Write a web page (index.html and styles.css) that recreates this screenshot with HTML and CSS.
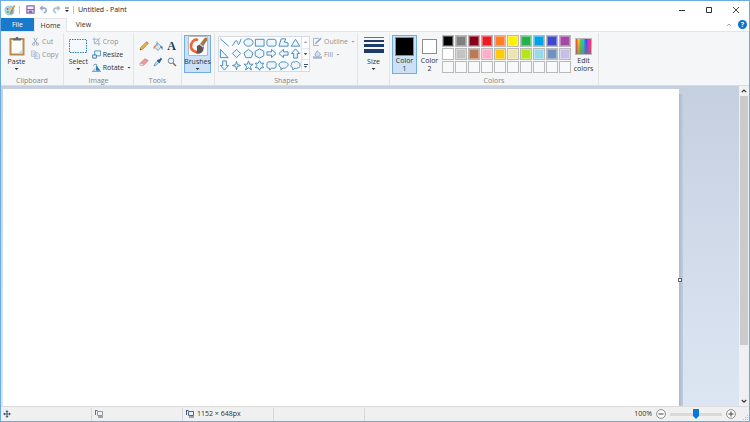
FILE: index.html
```html
<!DOCTYPE html>
<html lang="en">
<head>
<meta charset="utf-8">
<title>Untitled - Paint</title>
<link rel="stylesheet" href="styles.css">
</head>
<body>
<div class="window">
  <header class="titlebar">
    <svg class="app-icon" viewBox="0 0 12 12"><path d="M1 5.500C1 3 3 2 6 2s4 2 4 5-2 4-5 4-4-3-4-5.500z" fill="#a9d9ef" stroke="#6eb4d8" stroke-width=".6"/><circle cx="3.500" cy="5" r="1" fill="#e2574c"/><circle cx="3.800" cy="8" r="1" fill="#55ac48"/><circle cx="6" cy="4" r="1" fill="#f6c12d"/><path d="M6 10L10.500 1.500" stroke="#d98b2b" stroke-width="1.600"/><path d="M8 10V6" stroke="#4f86b5"/></svg>
    <span class="bar-rule"></span>
    <button class="quick" aria-label="Save"><svg viewBox="0 0 10 10"><path d="M1 1h8v8H1z" fill="#f4effb" stroke="#8667b5" stroke-width="1.400"/><path d="M1 4.500h8v1.300H1zM3 6.500h4V9H3z" fill="#8667b5"/></svg></button>
    <button class="quick" aria-label="Undo"><svg viewBox="0 0 10 10"><path d="M2 3.500h3.500C9 3.500 8.800 7.500 5.500 9" fill="none" stroke="#8fa9cc" stroke-width="1.800"/><path d="M0.500 3.500L4 .2v6.600z" fill="#8fa9cc"/></svg></button>
    <button class="quick" aria-label="Redo"><svg viewBox="0 0 10 10"><path d="M8 3.500H4.500C1 3.500 1.200 7.500 4.500 9" fill="none" stroke="#a9bdd6" stroke-width="1.800"/><path d="M9.500 3.500L6 .2v6.600z" fill="#a9bdd6"/></svg></button>
    <button class="customize" aria-label="Customize toolbar"><svg viewBox="0 0 6 6"><path d="M1 1h4" stroke="#333" stroke-width=".8"/><path d="M1 3h4L3 5z" fill="#222"/></svg></button>
    <span class="bar-rule"></span>
    <h1>Untitled - Paint</h1>
    <div class="caption-buttons">
      <button aria-label="Minimize"><svg viewBox="0 0 8 8"><path d="M1 4.500h6" stroke="#333"/></svg></button>
      <button aria-label="Maximize"><svg viewBox="0 0 8 8"><path d="M1.500 1.500h5v5h-5z" fill="none" stroke="#333"/></svg></button>
      <button aria-label="Close"><svg viewBox="0 0 8 8"><path d="M1 1l6 6M7 1L1 7" stroke="#333" stroke-width=".9"/></svg></button>
    </div>
  </header>

  <nav class="tabs">
    <button class="tab file">File</button>
    <button class="tab active">Home</button>
    <button class="tab">View</button>
    <div class="tabs-end">
      <button class="collapse" aria-label="Collapse ribbon"><svg viewBox="0 0 6 6"><path d="M.8 4L3 2l2.200 2" fill="none" stroke="#999" stroke-width=".9"/></svg></button>
      <button class="help" aria-label="Help">?</button>
    </div>
  </nav>

  <main class="ribbon">
    <section class="group clipboard">
      <div class="tools-row">
        <button class="big"><svg class="big-icon" viewBox="0 0 18 20"><path d="M2.500 3h13v15.500h-13z" fill="#fcfcfc" stroke="#bd8848" stroke-width="2"/><path d="M5 4.500V2.500h2.500L8 1h2l.5 1.500H13v2z" fill="#626a78"/><path d="M10 17.500l4.500-4.500v4.500z" fill="#ccd4df"/></svg><span>Paste</span><i class="arrow"></i></button>
        <div class="stack">
          <button class="small disabled"><svg viewBox="0 0 10 10"><path d="M3 1l3.500 6M7 1L3.500 7" stroke="#94a4bb" stroke-width="1.100"/><circle cx="2.800" cy="8" r="1.300" fill="none" stroke="#94a4bb"/><circle cx="7.200" cy="8" r="1.300" fill="none" stroke="#94a4bb"/></svg>Cut</button>
          <button class="small disabled"><svg viewBox="0 0 10 10"><path d="M.5 1h3.500l1.500 1.500V7h-5zM4 3h3.500L9.500 5v4.500H4z" fill="#e6eef7" stroke="#a8bbd2" stroke-width=".9"/><path d="M5.300 5.500h2M5.300 7.200h2.800M1.500 3.200h1.800M1.500 5h1.800" stroke="#b4c5da" stroke-width=".7"/></svg>Copy</button>
        </div>
      </div>
      <h2>Clipboard</h2>
    </section>

    <section class="group image">
      <div class="tools-row">
        <button class="big"><svg class="big-icon" viewBox="0 0 20 20"><path d="M1.500 3.500h17v13h-17z" fill="#f3f9fe" stroke="#2c83ba" stroke-dasharray="1.500 1"/></svg><span>Select</span><i class="arrow"></i></button>
        <div class="stack">
          <button class="small disabled"><svg viewBox="0 0 10 10"><path d="M2.500 .5V7.500h7M.5 2.500H7.500V9.500M3 7L9 1" fill="none" stroke="#9db4cc"/></svg>Crop</button>
          <button class="small"><svg viewBox="0 0 10 10"><path d="M3 1h6.500v5.500H3z" fill="#eaf5fd" stroke="#4a93c2"/><path d="M.8 5.500h4v3.500h-4z" fill="#fff" stroke="#276b9e"/></svg>Resize</button>
          <button class="small"><svg viewBox="0 0 10 10"><path d="M4.500 8.500V2l4.800 6.500z" fill="#267cba"/><path d="M3.800 4.500v4H.5z" fill="#a6cbe3"/><path d="M1.500 3c1-2 3-2 4-1M0 9.300h10" fill="none" stroke="#526f87" stroke-width=".8"/></svg>Rotate<i class="arrow"></i></button>
        </div>
      </div>
      <h2>Image</h2>
    </section>

    <section class="group tools">
      <div class="tool-grid">
        <button aria-label="Pencil"><svg viewBox="0 0 10 10"><path d="M1 9l.8-2.800L7.500 .8l1.700 1.700L3.800 8.200z" fill="#e7b24c" stroke="#a77a32" stroke-width=".6"/><path d="M7 1.200L8 .5l1.500 1.500-.8.9z" fill="#d9736d"/><path d="M1 9l.5-1.600 1.100 1.100z" fill="#444"/></svg></button>
        <button aria-label="Fill with color"><svg viewBox="0 0 10 10"><path d="M4.500 2l4 3.500-3.500 4L1.500 6z" fill="#dae8f4" stroke="#6d8cae" stroke-width=".8"/><path d="M4 5V.5" stroke="#6d8cae" stroke-width=".8"/><path d="M2 4.500C.2 5 .2 7 1 8.500 1.800 7.200 1.600 6 3 5z" fill="#d9823d"/><path d="M8 5c2 0 2 2 1.300 4C8.500 8 8.500 6.500 7 6z" fill="#2f88c2"/></svg></button>
        <button class="text-tool" aria-label="Text">A</button>
        <button aria-label="Eraser"><svg viewBox="0 0 10 10"><path d="M.7 6.800L5.800 1.800l3.500 1.600-4.800 5H1.500z" fill="#ed9b99" stroke="#c76f70" stroke-width=".6"/><path d="M.7 6.800l3.500.2.3 1.400H1.500z" fill="#f7d3d0"/></svg></button>
        <button aria-label="Color picker"><svg viewBox="0 0 10 10"><path d="M1 9l1-2.500 3.500-3.200L6.800 4.500 3.300 8z" fill="#c7e0f1" stroke="#4d83ad" stroke-width=".7"/><path d="M4.500 3l2.500 2.500M6 4.200L8.500 1.500" stroke="#285b8c" stroke-width="1.900"/></svg></button>
        <button aria-label="Magnifier"><svg viewBox="0 0 10 10"><circle cx="4" cy="3.800" r="2.800" fill="#edf6fc" stroke="#768797"/><path d="M6 6l3 3" stroke="#8c6b4c" stroke-width="1.500"/></svg></button>
      </div>
      <h2>Tools</h2>
    </section>

    <section class="group brushes">
      <button class="big selected"><svg class="brush-icon" viewBox="0 0 20 20"><path d="M.5.5h19v19H.5z" fill="#f9fbfc" stroke="#b4bcc3"/><path d="M10 4C6 2.500 2.500 7 3 11c.5 3.500 4 5 8 5.500" fill="none" stroke="#ee6534" stroke-width="2.600"/><path d="M17 1.500L12 8l3 2.500 4-6V2z" fill="#a8754a"/><path d="M9 10l3.500-2 3.500 3-1 4c-1.500 3-4 2.500-7 2.500 2-2.500.5-4.500 1-7.500z" fill="#5d5553"/><path d="M11.500 8l4 3.200" stroke="#c9cdd0" stroke-width="1.500"/></svg><span>Brushes</span><i class="arrow"></i></button>
    </section>

    <section class="group shapes">
      <div class="tools-row">
        <div class="gallery">
          <div class="shape-grid">
            <button aria-label="Line"><svg viewBox="0 0 12 12"><path d="M1.500 2l9 8"/></svg></button>
            <button aria-label="Curve"><svg viewBox="0 0 12 12"><path fill="none" d="M1 9c2 1 3-6 5-5s1 5 2.500 4S10 3 11 2"/></svg></button>
            <button aria-label="Oval"><svg viewBox="0 0 12 12"><ellipse cx="6" cy="6" rx="5" ry="4"/></svg></button>
            <button aria-label="Rectangle"><svg viewBox="0 0 12 12"><path d="M1.500 2.500h9.500v7.500h-9.500z"/></svg></button>
            <button aria-label="Rounded rectangle"><svg viewBox="0 0 12 12"><rect x="1" y="2.500" width="10" height="7.500" rx="2"/></svg></button>
            <button aria-label="Polygon"><svg viewBox="0 0 12 12"><path d="M3.500 2h5L7 5.500l4 1V10H1z"/></svg></button>
            <button aria-label="Triangle"><svg viewBox="0 0 12 12"><path d="M6 2.500l4.700 7.500H1.300z"/></svg></button>
            <button aria-label="Right triangle"><svg viewBox="0 0 12 12"><path d="M1.500 1.500v9h8.500z"/></svg></button>
            <button aria-label="Diamond"><svg viewBox="0 0 12 12"><path d="M6 1.500l4.500 4.500L6 10.500 1.500 6z"/></svg></button>
            <button aria-label="Pentagon"><svg viewBox="0 0 12 12"><path d="M6 1.500l5 4L9 10.500H3L1 5.500z"/></svg></button>
            <button aria-label="Hexagon"><svg viewBox="0 0 12 12"><path d="M6 1l4.700 2.500v5L6 11 1.300 8.500v-5z"/></svg></button>
            <button aria-label="Right arrow"><svg viewBox="0 0 12 12"><path d="M1 4.200h5V1.500L11 6l-5 4.500V7.800H1z"/></svg></button>
            <button aria-label="Left arrow"><svg viewBox="0 0 12 12"><path d="M11 4.200H6V1.500L1 6l5 4.500V7.800h5z"/></svg></button>
            <button aria-label="Up arrow"><svg viewBox="0 0 12 12"><path d="M4 11V6H1.500L6 1l4.500 5H8v5z"/></svg></button>
            <button aria-label="Down arrow"><svg viewBox="0 0 12 12"><path d="M4 1v5H1.500L6 11l4.500-5H8V1z"/></svg></button>
            <button aria-label="Four-point star"><svg viewBox="0 0 12 12"><path d="M6 1.500l1 3.500 3.500 1L7 7l-1 3.500L5 7 1.500 6 5 5z"/></svg></button>
            <button aria-label="Five-point star"><svg viewBox="0 0 12 12"><path d="M6 1l1.300 3.600H11L8.100 7l1.100 3.800L6 8.500l-3.200 2.300L3.900 7 1 4.600h3.700z"/></svg></button>
            <button aria-label="Six-point star"><svg viewBox="0 0 12 12"><path d="M6 .8l1.500 2.700h3L9 6l1.500 2.500h-3L6 11.200 4.500 8.500h-3L3 6 1.500 3.500h3z"/></svg></button>
            <button aria-label="Rounded callout"><svg viewBox="0 0 12 12"><path d="M3 2h6q2 0 2 2v3q0 2-2 2H6l-2 2V9H3Q1 9 1 7V4Q1 2 3 2z"/></svg></button>
            <button aria-label="Oval callout"><svg viewBox="0 0 12 12"><path d="M3.500 8.500C-1 6.500 1 2 6 2s7 3.500 3 6C8 9 6.500 9 5.500 8.800l-2.500 2z"/></svg></button>
            <button aria-label="Cloud callout"><svg viewBox="0 0 12 12"><path d="M3 8.500C.8 8 .5 5.500 1.500 5 1 2.800 3 1.500 5 2.300c1.200-1.200 3.500-.8 4 .4 2 .2 2.500 2.300 1.700 3.300.8 1.700-1 2.800-2.200 2.500-1 1-2 .8-3 .4L3 10.800z"/></svg></button>
          </div>
          <div class="gallery-nav">
            <button aria-label="Scroll up"><i class="arrow up"></i></button>
            <button aria-label="Scroll down"><i class="arrow"></i></button>
            <button class="more" aria-label="More shapes"><i class="arrow"></i></button>
          </div>
        </div>
        <div class="stack">
          <button class="small disabled"><svg viewBox="0 0 10 10"><path d="M.5 1.500h6M.5 1.500v8h6M2 8L9 1.500" fill="none" stroke="#9baec5"/><path d="M3 7l6-5.500" stroke="#8da2bd" stroke-width="1.500"/></svg>Outline<i class="arrow"></i></button>
          <button class="small disabled"><svg viewBox="0 0 10 10"><path d="M4.500 1l4 3.500-3 3.500L2 5.500z" fill="#d7e0eb" stroke="#94a9c3"/><path d="M.5 7v2.200h9V7" fill="#a9bad0" stroke="#94a9c3" stroke-width=".8"/></svg>Fill<i class="arrow"></i></button>
        </div>
      </div>
      <h2>Shapes</h2>
    </section>

    <section class="group size">
      <button class="big"><svg class="big-icon" viewBox="0 0 20 20"><path d="M0 1.500h20" stroke="#5c7190"/><path d="M0 5h20" stroke="#1f3c66" stroke-width="2"/><path d="M0 9.500h20" stroke="#1f3c66" stroke-width="3"/><path d="M0 15h20" stroke="#1f3c66" stroke-width="4"/></svg><span>Size</span><i class="arrow"></i></button>
    </section>

    <section class="group colors">
      <div class="tools-row">
        <button class="color-slot selected"><i class="chip black"></i><span>Color<br>1</span></button>
        <button class="color-slot"><i class="chip white"></i><span>Color<br>2</span></button>
        <div class="palette">
          <button class="c-black" aria-label="Black"></button><button class="c-gray" aria-label="Gray"></button><button class="c-darkred" aria-label="Dark red"></button><button class="c-red" aria-label="Red"></button><button class="c-orange" aria-label="Orange"></button><button class="c-yellow" aria-label="Yellow"></button><button class="c-green" aria-label="Green"></button><button class="c-turquoise" aria-label="Turquoise"></button><button class="c-indigo" aria-label="Indigo"></button><button class="c-purple" aria-label="Purple"></button>
          <button class="c-white" aria-label="White"></button><button class="c-lightgray" aria-label="Light gray"></button><button class="c-brown" aria-label="Brown"></button><button class="c-rose" aria-label="Rose"></button><button class="c-gold" aria-label="Gold"></button><button class="c-cream" aria-label="Light yellow"></button><button class="c-lime" aria-label="Lime"></button><button class="c-sky" aria-label="Light turquoise"></button><button class="c-bluegray" aria-label="Blue-gray"></button><button class="c-lavender" aria-label="Lavender"></button>
          <button aria-label="Custom 1"></button><button aria-label="Custom 2"></button><button aria-label="Custom 3"></button><button aria-label="Custom 4"></button><button aria-label="Custom 5"></button><button aria-label="Custom 6"></button><button aria-label="Custom 7"></button><button aria-label="Custom 8"></button><button aria-label="Custom 9"></button><button aria-label="Custom 10"></button>
        </div>
        <button class="color-slot edit"><i class="chip rainbow"></i><span>Edit<br>colors</span></button>
      </div>
      <h2>Colors</h2>
    </section>
  </main>

  <div class="workspace">
    <div class="desk">
      <div class="page"></div>
      <div class="shade"><i class="handle"></i></div>
    </div>
    <div class="scrollbar">
      <button aria-label="Scroll up"><svg viewBox="0 0 6 6"><path d="M.8 4.200L3 2l2.200 2.200" fill="none" stroke="#333" stroke-width="1.200"/></svg></button>
      <div class="scroll-track"><div class="scroll-thumb"></div></div>
      <button aria-label="Scroll down"><svg viewBox="0 0 6 6"><path d="M.8 2L3 4.200 5.200 2" fill="none" stroke="#333" stroke-width="1.200"/></svg></button>
    </div>
  </div>

  <footer class="status">
    <div class="cell"><svg viewBox="0 0 8 8"><path d="M4 1v6M1 4h6" stroke="#405a7b"/><path d="M4 0l1.500 2h-3zM4 8l1.500-2h-3zM0 4l2-1.500v3zM8 4L6 2.500v3z" fill="#405a7b"/></svg></div>
    <div class="cell"><svg viewBox="0 0 8 8"><path d="M2.500 1.500h5v4h-5z" fill="none" stroke="#8090a2" stroke-width=".9"/><path d="M.5 0v5M0 .5h2.500" stroke="#607489"/><path d="M3 7h5" stroke="#405a7b"/></svg></div>
    <div class="cell"><svg viewBox="0 0 8 8"><path d="M2.500 1.500h5v4h-5z" fill="#e7f0f9" stroke="#405a7b" stroke-width=".9"/><path d="M.5 0v5M0 .5h2.500M3 7h5" stroke="#405a7b"/></svg><span>1152 × 648px</span></div>
    <div class="cell"></div>
    <div class="zoom">
      <label for="zoom">100%</label>
      <button aria-label="Zoom out"><svg viewBox="0 0 10 10"><circle cx="5" cy="5" r="4.400" fill="#fafafa" stroke="#777" stroke-width=".8"/><path d="M2.500 5h5" stroke="#444"/></svg></button>
      <input id="zoom" type="range" min="0" max="100" value="50">
      <button aria-label="Zoom in"><svg viewBox="0 0 10 10"><circle cx="5" cy="5" r="4.400" fill="#fafafa" stroke="#777" stroke-width=".8"/><path d="M2.500 5h5M5 2.500v5" stroke="#444"/></svg></button>
    </div>
    <svg class="grip" viewBox="0 0 6 6"><path d="M4 0h1v1H4zM2 2h1v1H2zM4 2h1v1H4zM0 4h1v1H0zM2 4h1v1H2zM4 4h1v1H4z" fill="#bbb"/></svg>
  </footer>
</div>
</body>
</html>
```
FILE: styles.css
```css
* { box-sizing: border-box; }

body {
  margin: 0;
  font: 7px/8px "Open Sans", "Noto Sans", sans-serif;
  color: #303030;
}

button {
  display: flex;
  align-items: center;
  justify-content: center;
  margin: 0;
  padding: 0;
  border: 0;
  background: none;
  font: inherit;
  color: inherit;
}

svg { display: block; flex: none; }
h1, h2 { margin: 0; font-size: 7px; font-weight: 400; }

.window {
  display: flex;
  flex-direction: column;
  height: 100vh;
  border: 1px solid #6aabe3;
  background: #fff;
}

/* Title bar */
.titlebar {
  display: flex;
  align-items: center;
  flex: none;
  height: 17px;
  padding-left: 3px;
}
.app-icon { width: 12px; height: 12px; }
.bar-rule { width: 1px; height: 8px; margin: 0 4px 0 3px; background: #c4c4c4; }
.quick { width: 13px; }
.quick svg { width: 9px; height: 9px; }
.customize { width: 7px; }
.customize svg { width: 6px; height: 6px; }
.titlebar h1 { color: #222; }
.caption-buttons { display: flex; margin-left: auto; }
.caption-buttons button { width: 27px; height: 16px; }
.caption-buttons svg { width: 8px; height: 8px; }

/* Tabs */
.tabs {
  display: flex;
  flex: none;
  height: 14px;
  border-bottom: 1px solid #e3e5e7;
}
.tab { width: 33px; height: 13px; }
.tab.file { background: #1979ca; color: #fff; }
.tab.active {
  height: 14px;
  border: 1px solid #e3e5e7;
  border-bottom: 0;
  background: #f5f6f7;
}
.tabs-end { display: flex; align-items: center; gap: 6px; margin-left: auto; padding-right: 2px; }
.collapse svg { width: 6px; height: 6px; }
.help {
  width: 9px;
  height: 9px;
  border-radius: 50%;
  background: #0873d1;
  color: #fff;
  font-weight: 700;
}

/* Ribbon */
.ribbon {
  display: flex;
  flex: none;
  height: 54px;
  border-bottom: 1px solid #dadbdc;
  background: #f5f6f7;
}
.group {
  display: flex;
  flex-direction: column;
  justify-content: space-between;
  margin: 1px 0 0;
  padding: 2px 2px 0;
  border-right: 1px solid #e3e4e6;
}
.group h2 { color: #858585; text-align: center; }
.tools-row { display: flex; }
.clipboard { width: 63px; }
.image { width: 70px; }
.tools { width: 48px; }
.brushes { width: 33px; }
.shapes { width: 143px; }
.size { width: 32px; }
.colors { width: 209px; }

.big {
  flex-direction: column;
  justify-content: flex-start;
  width: 27px;
  height: 38px;
  border: 1px solid transparent;
}
.big span { margin-top: 2px; }
.big-icon { width: 20px; height: 20px; }
.big .arrow { margin-top: 2px; }
.selected { border: 1px solid #71aee6; background: #cce1f6; }
.brush-icon { width: 20px; height: 20px; }

.arrow {
  width: 4px;
  height: 2px;
  background: currentColor;
  clip-path: polygon(0 0, 100% 0, 50% 100%);
}
.arrow.up { clip-path: polygon(0 100%, 100% 100%, 50% 0); color: #999; }

.stack { display: flex; flex-direction: column; }
.small { justify-content: flex-start; gap: 2px; height: 13px; }
.small svg { width: 9px; height: 9px; }
.disabled { color: #929292; }
.small .arrow { margin-left: 1px; }
.image .stack, .clipboard .stack { padding-left: 1px; }

.tool-grid {
  display: grid;
  grid-template-columns: repeat(3, 14px);
  grid-auto-rows: 16px;
  justify-content: center;
  padding-top: 3px;
}
.tool-grid svg { width: 10px; height: 10px; }
.text-tool { color: #1f3c62; font: 700 12px/12px "Liberation Serif", serif; }

.gallery {
  display: flex;
  width: 92px;
  height: 36px;
  margin: 1px 3px 0 1px;
  border: 1px solid #d5dbe1;
  background: #fbfcfd;
}
.shape-grid { display: grid; flex: 1; grid-template-columns: repeat(7, 1fr); grid-auto-rows: 11px; align-content: space-around; }
.shape-grid svg { width: 11px; height: 11px; fill: #eef6fb; stroke: #3f86b8; stroke-width: 1; }
.gallery-nav { display: flex; flex-direction: column; width: 8px; border-left: 1px solid #dfe3e7; color: #334f75; }
.gallery-nav button { flex: 1; border-bottom: 1px solid #e4e7eb; }
.gallery-nav .more { flex-direction: column; gap: 1px; border: 0; }
.more::before { content: ""; width: 4px; height: 1px; background: #334f75; }

.color-slot {
  flex-direction: column;
  width: 25px;
  height: 39px;
}
.color-slot span { margin-top: 1px; }
.chip { display: block; width: 19px; height: 19px; border: 1px solid #8c8c8c; }
.black { background: #000; }
.white { width: 15px; height: 15px; margin: 2px; background: #fff; }
.rainbow {
  width: 17px;
  height: 17px;
  margin: 1px;
  border: 1px solid #bbb;
  background: linear-gradient(transparent, #777a), linear-gradient(90deg, #f33, #fc2, #3d4, #1ce, #34f, #e2d, #f34);
}
.palette {
  display: grid;
  grid-template-columns: repeat(10, 12px);
  grid-auto-rows: 12px;
  align-content: start;
  gap: 1px;
}
.palette button { border: 1px solid #bababa; background-color: #f8f9fa; }
.palette button[class] { box-shadow: inset 0 0 0 1px #ffffff55; }
.palette .c-black { background: #000; }
.palette .c-gray { background: #7f7f7f; }
.palette .c-darkred { background: #880015; }
.palette .c-red { background: #ed1c24; }
.palette .c-orange { background: #ff7f27; }
.palette .c-yellow { background: #fff200; }
.palette .c-green { background: #22b14c; }
.palette .c-turquoise { background: #00a2e8; }
.palette .c-indigo { background: #3f48cc; }
.palette .c-purple { background: #a349a4; }
.palette .c-white { background: #fff; }
.palette .c-lightgray { background: #c3c3c3; }
.palette .c-brown { background: #b97a57; }
.palette .c-rose { background: #ffaec9; }
.palette .c-gold { background: #ffc90e; }
.palette .c-cream { background: #efe4b0; }
.palette .c-lime { background: #b5e61d; }
.palette .c-sky { background: #99d9ea; }
.palette .c-bluegray { background: #7092be; }
.palette .c-lavender { background: #c8bfe7; }

/* Drawing area */
.workspace { display: flex; flex: 1; min-height: 0; }
.desk {
  display: flex;
  flex: 1;
  padding: 3px 0 0 2px;
  background: linear-gradient(#c5cfe0, #dce6f3);
}
.page { flex: 0 0 auto; width: calc(92% - 1px); background: #fff; }
.shade {
  position: relative;
  width: 4px;
  margin-top: 5px;
  background: linear-gradient(90deg, #a9b7ce, #c2cede);
}
.handle {
  position: absolute;
  top: 59%;
  left: -1px;
  width: 4px;
  height: 4px;
  border: 1px solid #666;
  background: #fff;
}
.scrollbar { display: flex; flex-direction: column; width: 10px; padding: 0 1px; background: #f0f0f0; }
.scrollbar button { height: 10px; }
.scrollbar svg { width: 6px; height: 6px; }
.scroll-track { flex: 1; }
.scroll-thumb { height: 83%; background: #cbcbcb; }

/* Status bar */
.status {
  display: flex;
  align-items: center;
  flex: none;
  height: 15px;
  border-top: 1px solid #dcdcdc;
  background: #f0f0f0;
}
.cell {
  display: flex;
  align-items: center;
  gap: 3px;
  width: 91px;
  height: 13px;
  padding-left: 2px;
  border-right: 1px solid #d9d9d9;
}
.cell + .cell { padding-left: 3px; }
.cell svg { width: 8px; height: 8px; }
.zoom { display: flex; align-items: center; gap: 4px; margin-left: auto; }
.zoom svg { width: 10px; height: 10px; }
.zoom input {
  appearance: none;
  width: 52px;
  height: 10px;
  margin: 0;
  background: linear-gradient(#d9d9d9, #d9d9d9) center / 100% 3px no-repeat;
}
.zoom input::-webkit-slider-thumb {
  appearance: none;
  width: 6px;
  height: 10px;
  background: #0878d7;
  clip-path: polygon(0 0, 100% 0, 100% 70%, 50% 100%, 0 70%);
}
.grip { align-self: flex-end; width: 6px; height: 6px; margin-left: 7px; }
```
